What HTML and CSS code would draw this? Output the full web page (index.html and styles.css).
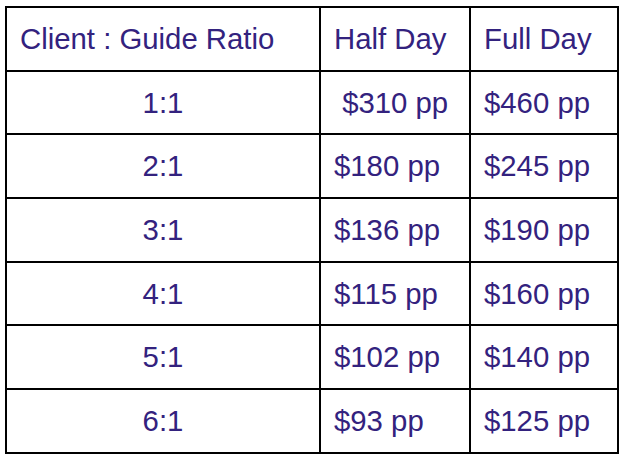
FILE: index.html
```html
<!DOCTYPE html>
<html>
<head>
<meta charset="utf-8">
<link rel="stylesheet" href="styles.css">
</head>
<body>
<table class="rates">
  <colgroup>
    <col class="c-ratio">
    <col class="c-half">
    <col class="c-full">
  </colgroup>
  <tr><td class="head">Client : Guide Ratio</td><td>Half Day</td><td>Full Day</td></tr>
  <tr><td class="ratio">1:1</td><td>&nbsp;$310 pp</td><td>$460 pp</td></tr>
  <tr><td class="ratio">2:1</td><td>$180 pp</td><td>$245 pp</td></tr>
  <tr><td class="ratio">3:1</td><td>$136 pp</td><td>$190 pp</td></tr>
  <tr><td class="ratio">4:1</td><td>$115 pp</td><td>$160 pp</td></tr>
  <tr><td class="ratio">5:1</td><td>$102 pp</td><td>$140 pp</td></tr>
  <tr><td class="ratio">6:1</td><td>$93 pp</td><td>$125 pp</td></tr>
</table>
</body>
</html>
```
FILE: styles.css
```css
html, body {
  background: #ffffff;
}
body {
  margin: 6px 0 0 5px;
  font-family: "Liberation Sans", Arial, sans-serif;
}
.rates {
  border-collapse: collapse;
  table-layout: fixed;
  width: 614px;
}
.c-ratio { width: 314px; }
.c-half { width: 150px; }
.c-full { width: 148px; }
.rates tr {
  height: 63.7px;
}
.rates td {
  border: 2px solid #000000;
  padding: 0 0 0 13px;
  font-size: 29.33px;
  line-height: 1.15;
  color: #33227e;
  vertical-align: middle;
  text-align: left;
  white-space: nowrap;
}
.rates td.ratio {
  text-align: center;
  padding: 0;
}
```
